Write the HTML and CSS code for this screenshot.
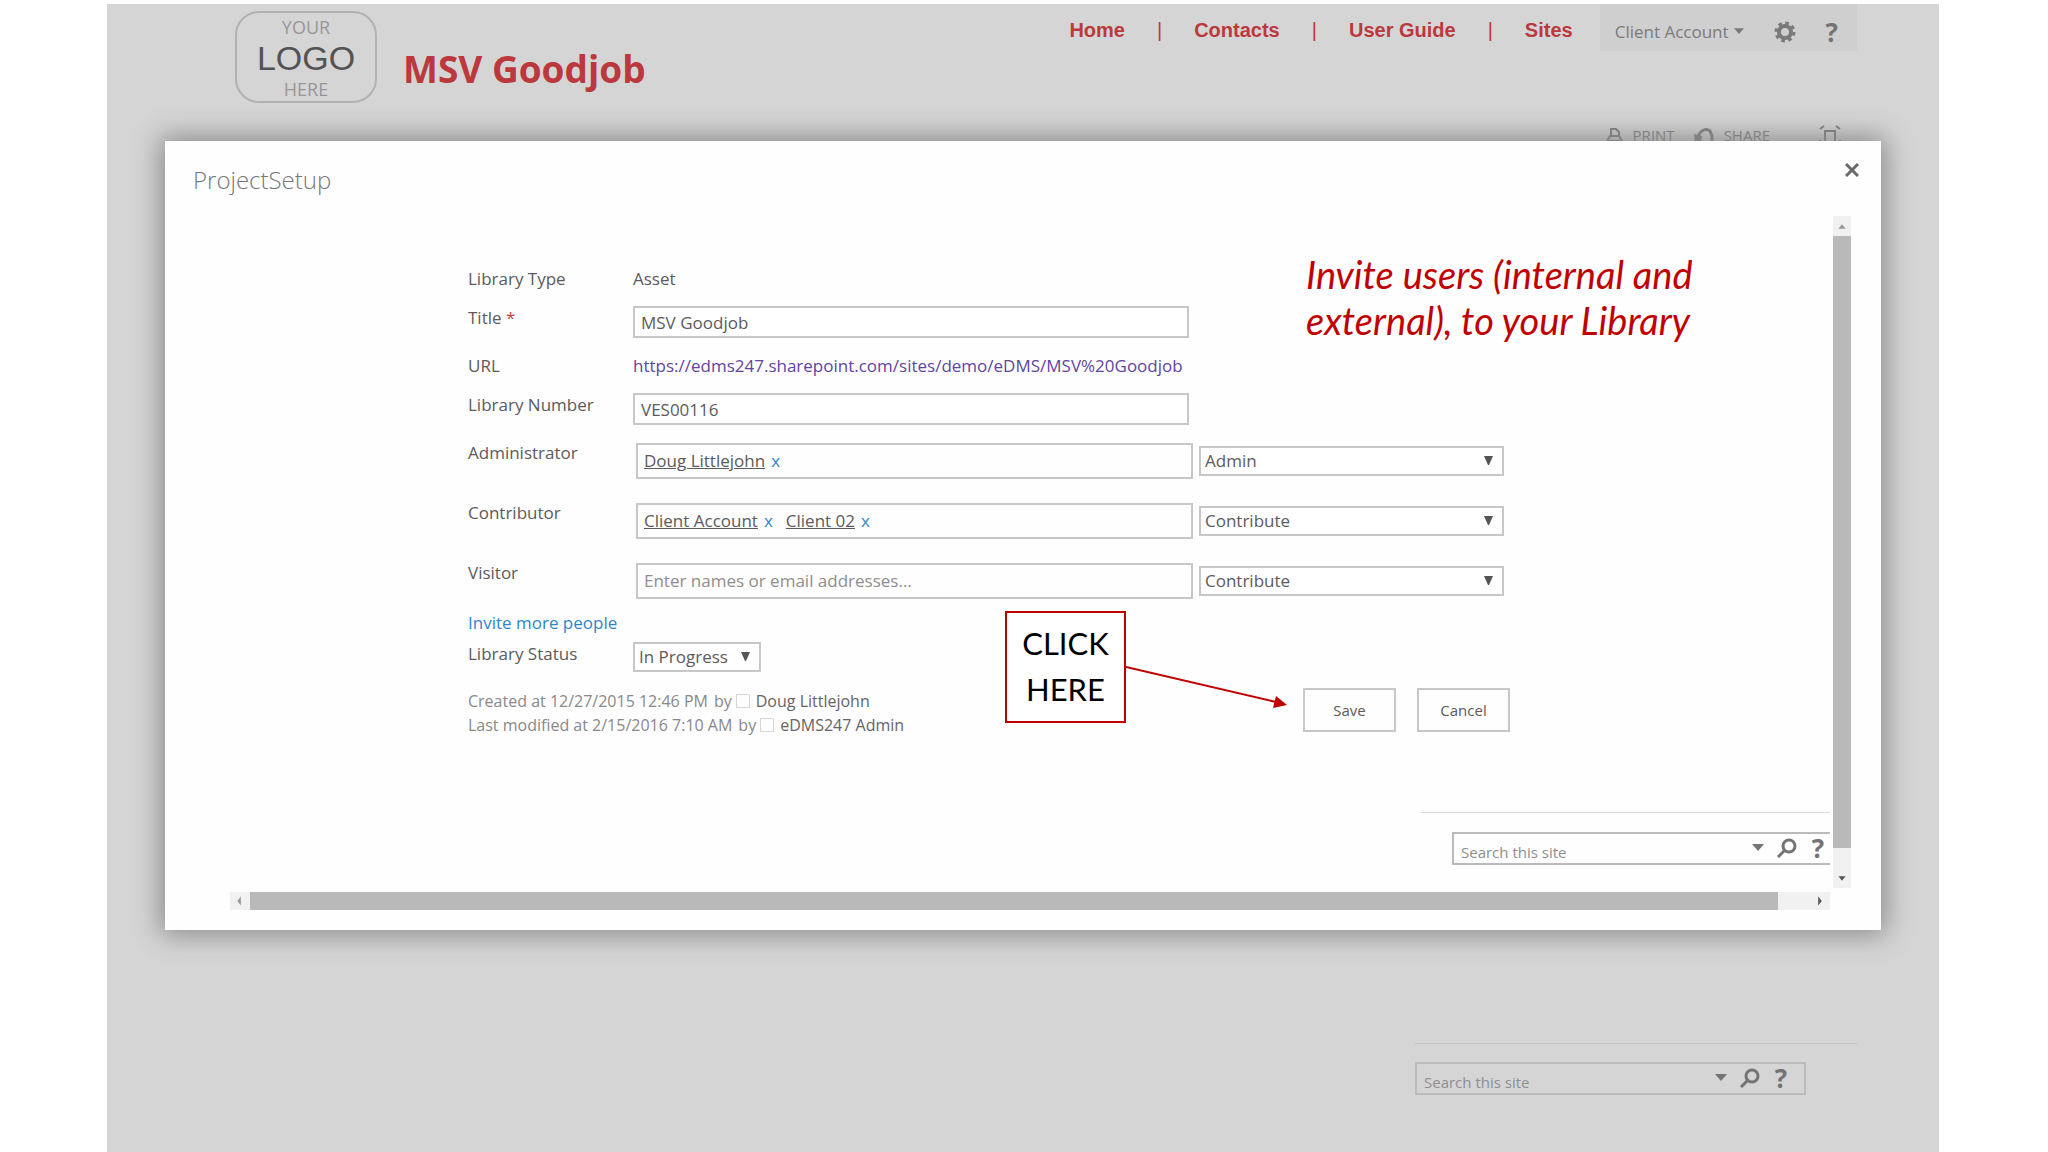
FILE: index.html
```html
<!DOCTYPE html>
<html lang="en">
<head>
<meta charset="utf-8">
<title>MSV Goodjob - ProjectSetup</title>
<link rel="stylesheet" href="styles.css">
</head>
<body>
<svg class="defs" width="0" height="0" aria-hidden="true">
  <symbol id="i-search" viewBox="0 0 20 20"><circle cx="12" cy="8" r="6" fill="none" stroke="currentColor" stroke-width="3"/><path d="M8 12L1 19" stroke="currentColor" stroke-width="3"/></symbol>
  <symbol id="i-down" viewBox="0 0 12 8"><path d="M0 0h12L6 7z" fill="currentColor"/></symbol>
</svg>
<div class="site">
  <header class="top">
    <div class="brand">
      <div class="logo"><span>YOUR</span><strong>LOGO</strong><span>HERE</span></div>
      <h1>MSV Goodjob</h1>
    </div>
    <nav class="nav">
      <a href="#">Home</a><i>|</i><a href="#">Contacts</a><i>|</i><a href="#">User Guide</a><i>|</i><a href="#">Sites</a>
    </nav>
    <div class="account">
      <button type="button" class="user">Client Account<svg width="10" height="7"><use href="#i-down"/></svg></button>
      <button type="button" aria-label="Settings"><svg width="22" height="22" viewBox="0 0 22 22"><g fill="none" stroke="currentColor"><circle cx="11" cy="11" r="6" stroke-width="4"/><circle cx="11" cy="11" r="9" stroke-width="3" stroke-dasharray="3.6 3.47"/></g></svg></button>
      <button type="button" class="help" aria-label="Help">?</button>
    </div>
  </header>
  <div class="tools">
    <a href="#"><svg width="17" height="16" viewBox="0 0 17 16"><path d="M5 9V2h5l3 3v4M1 14l3-5h9l3 5z" fill="none" stroke="currentColor" stroke-width="2"/></svg>PRINT</a>
    <a href="#"><svg width="20" height="17" viewBox="0 0 20 17"><path d="M4 10C6 3 12 1 16 4l2 5v6" fill="none" stroke="currentColor" stroke-width="3"/><path d="M0 7l8 2-1 6H1z" fill="currentColor"/></svg>SHARE</a>
    <a href="#" class="focus" aria-label="Focus on content"><svg width="22" height="20" viewBox="0 0 22 20"><path d="M6 6h10v11H6zM1 4l4-3M17 1l4 3M1 15v4h4M17 19h4v-4" fill="none" stroke="currentColor" stroke-width="2"/></svg></a>
  </div>
  <footer class="foot">
    <form class="search">
      <input type="text" aria-label="Search this site" placeholder="Search this site">
      <button type="button" aria-label="Scope"><svg width="12" height="8"><use href="#i-down"/></svg></button>
      <button type="button" aria-label="Search"><svg width="20" height="20"><use href="#i-search"/></svg></button>
      <button type="button" class="help" aria-label="Search help">?</button>
    </form>
  </footer>

  <section class="dialog" role="dialog" aria-labelledby="dlg-title">
    <div class="dialog-head">
      <h2 id="dlg-title">ProjectSetup</h2>
      <button type="button" aria-label="Close"><svg width="14" height="14" viewBox="0 0 14 14"><path d="M1 1l12 12M13 1L1 13" stroke="currentColor" stroke-width="3"/></svg></button>
    </div>
    <div class="frame">
      <div class="pane">
        <form class="setup">
          <div class="row r-text"><span class="label">Library Type</span><span>Asset</span></div>
          <div class="row r-input"><label for="title">Title <em>*</em></label><input id="title" class="box" type="text" value="MSV Goodjob"></div>
          <div class="row r-text"><span class="label">URL</span><a class="url" href="#">https://edms247.sharepoint.com/sites/demo/eDMS/MSV%20Goodjob</a></div>
          <div class="row r-input"><label for="num">Library Number</label><input id="num" class="box" type="text" value="VES00116"></div>
          <div class="row r-people"><label for="admin">Administrator</label>
            <div class="people"><a href="#">Doug Littlejohn</a><button type="button" aria-label="Remove Doug Littlejohn">x</button><input id="admin" type="text"></div>
            <div class="select role"><select aria-label="Administrator role"><option>Admin</option></select><svg width="9" height="9" viewBox="0 0 9 9"><path d="M0 0h9L5 9H4z"/></svg></div></div>
          <div class="row r-people"><label for="contrib">Contributor</label>
            <div class="people"><a href="#">Client Account</a><button type="button" aria-label="Remove Client Account">x</button><a href="#">Client 02</a><button type="button" aria-label="Remove Client 02">x</button><input id="contrib" type="text"></div>
            <div class="select role"><select aria-label="Contributor role"><option>Contribute</option></select><svg width="9" height="9" viewBox="0 0 9 9"><path d="M0 0h9L5 9H4z"/></svg></div></div>
          <div class="row r-visitor"><label for="visitor">Visitor</label>
            <div class="people"><input id="visitor" type="text" placeholder="Enter names or email addresses..."></div>
            <div class="select role"><select aria-label="Visitor role"><option>Contribute</option></select><svg width="9" height="9" viewBox="0 0 9 9"><path d="M0 0h9L5 9H4z"/></svg></div></div>
          <div class="row r-link"><a class="invite" href="#">Invite more people</a></div>
          <div class="row r-status"><label for="status">Library Status</label>
            <div class="select status"><select id="status"><option>In Progress</option></select><svg width="9" height="9" viewBox="0 0 9 9"><path d="M0 0h9L5 9H4z"/></svg></div></div>
          <div class="end">
            <div class="meta">
              <p>Created at 12/27/2015 12:46 PM<span>by</span><b></b><a href="#">Doug Littlejohn</a></p>
              <p>Last modified at 2/15/2016 7:10 AM<span>by</span><b></b><a href="#">eDMS247 Admin</a></p>
            </div>
            <div class="actions"><button type="button">Save</button><button type="button">Cancel</button></div>
          </div>
        </form>
        <div class="pane-foot">
          <form class="search">
            <input type="text" aria-label="Search this site" placeholder="Search this site">
            <button type="button" aria-label="Scope"><svg width="12" height="8"><use href="#i-down"/></svg></button>
            <button type="button" aria-label="Search"><svg width="20" height="20"><use href="#i-search"/></svg></button>
            <button type="button" class="help" aria-label="Search help">?</button>
          </form>
        </div>
      </div>
      <div class="bar vertical"><svg class="dim" viewBox="0 0 20 20"><path d="M6 13h8l-4-5z"/></svg><div class="thumb"></div><svg viewBox="0 0 20 20"><path d="M6 8h8l-4 5z"/></svg></div>
      <div class="bar horizontal"><svg class="dim" viewBox="0 0 20 20"><path d="M11 5v10l-4-5z"/></svg><div class="thumb"></div><svg viewBox="0 0 20 20"><path d="M8 5v10l4-5z"/></svg></div>
    </div>
    <p class="note">Invite users (internal and<br>external), to your Library</p>
    <div class="callout">CLICK<br>HERE</div>
    <svg class="arrow" width="162" height="48" viewBox="0 0 162 48"><path d="M0 3L150 38" stroke="#c00000" stroke-width="2"/><path d="M161 41l-14 3 3-12z" fill="#c00000"/></svg>
  </section>
</div>
</body>
</html>
```

FILE: styles.css
```css
* { box-sizing: border-box; }
body {
  margin: 0;
  padding: 4px 109px 0 107px;
  background: #fff;
  color: #5c5a5c;
  font: 17px/24px "Open Sans", "Noto Sans", sans-serif;
}
h1, h2, p { margin: 0; }
a { color: inherit; text-decoration: none; }
button, input, select { font: inherit; color: inherit; margin: 0; }
button { background: none; border: 0; padding: 0; display: flex; align-items: center; justify-content: center; }
.defs { position: absolute; }

.site {
  position: relative;
  display: flex;
  flex-direction: column;
  min-height: calc(100vh - 4px);
  background: #d6d5d6;
}
.top { display: flex; align-items: flex-start; padding: 0 82px 0 128px; }
.brand { display: flex; flex: 1; gap: 26px; padding-top: 7px; }
.logo {
  display: flex;
  flex-direction: column;
  align-items: center;
  justify-content: center;
  width: 142px;
  height: 92px;
  padding-top: 2px;
  border: 2px solid #b2b1b2;
  border-radius: 24px;
  color: #979697;
  font-size: 18px;
  line-height: 24px;
}
.logo strong { color: #545354; font: 400 34px/38px "Liberation Sans", Arial, sans-serif; }
h1 { color: #bb383d; font-size: 37px; line-height: 48px; font-weight: 700; padding-top: 34px; }
.nav {
  display: flex;
  gap: 32px;
  margin-right: 27px;
  padding-top: 14px;
  color: #bb383d;
  font: 700 20px/24px "Liberation Sans", Arial, sans-serif;
}
.nav i { font-style: normal; font-weight: 400; }
.account {
  display: flex;
  align-items: center;
  gap: 30px;
  height: 47px;
  padding: 8px 19px 0 15px;
  background: #d0cfd0;
  color: #7b7a7b;
}
.user { gap: 5px; }
.help { font-weight: 700; font-size: 26px; color: #757375; }
.tools {
  display: flex;
  justify-content: flex-end;
  gap: 19px;
  padding: 20px 98px 0 0;
  font-size: 15px;
  color: #7b7a7b;
}
.tools a { display: flex; align-items: center; gap: 10px; }
.tools .focus { margin-left: 30px; }

.foot {
  width: 442px;
  margin: auto 82px 57px auto;
  padding-top: 18px;
  border-top: 1px solid #c4c2c4;
}
.search {
  display: flex;
  align-items: center;
  gap: 13px;
  width: 391px;
  height: 33px;
  padding: 0 15px 2px 7px;
  border: 2px solid #bdbabd;
  color: #757375;
  flex: none;
}
.search input {
  flex: 1;
  min-width: 0;
  height: 28px;
  padding: 8px 0 0;
  border: 0;
  background: none;
  font-size: 15px;
}
.search .help { width: 16px; height: 20px; }
::placeholder { color: #8f8d8f; opacity: 1; }

.dialog {
  position: absolute;
  top: 137px;
  left: 58px;
  right: 58px;
  background: #fefefe;
  box-shadow: 0 0 26px 4px #888;
}
.dialog-head {
  display: flex;
  justify-content: space-between;
  align-items: flex-start;
  height: 75px;
  padding: 20px 22px 0 28px;
}
h2 { color: #777; font-size: 24px; line-height: 38px; font-weight: 300; }
.dialog-head button { color: #6b696b; padding-top: 2px; }
.frame {
  display: grid;
  grid-template-columns: 1fr 18px;
  gap: 4px 3px;
  padding: 0 30px 20px 65px;
}
.pane { display: flex; flex-direction: column; min-height: 672px; padding: 51px 0 0 238px; overflow: hidden; }
.setup { max-width: 1042px; }
.row { display: flex; align-items: flex-start; }
.row label, .row .label { width: 165px; flex: none; }
.row em { color: #d04040; font-style: normal; }
.r-text { height: 39px; }
.r-input { height: 48px; }
.r-people { height: 60px; }
.r-visitor { height: 50px; }
.r-link { height: 31px; }
.r-status { height: 46px; }
.box { width: 556px; height: 32px; padding: 0 6px; border: 2px solid #c8c6c8; background: #fff; }
.url { color: #5f459f; }
.people {
  display: flex;
  align-items: center;
  width: 557px;
  height: 36px;
  margin: 2px 6px 0 3px;
  padding: 0 6px;
  border: 2px solid #c8c6c8;
}
.people a { text-decoration: underline; }
.people button { color: #2e86c8; margin: 0 13px 0 6px; }
.people input { flex: 1; min-width: 0; border: 0; padding: 0; background: none; }
.select { display: grid; align-items: center; height: 30px; }
.select select, .select svg { grid-area: 1 / 1; }
.select select { width: 100%; height: 100%; appearance: none; border: 2px solid #c8c6c8; border-radius: 0; background: #fff; padding: 0 4px; }
.select svg { justify-self: end; margin: 0 11px 2px 0; pointer-events: none; fill: #555; }
.role { width: 305px; margin-top: 5px; }
.status { width: 128px; }
.invite { color: #2e86c8; }
.end { display: flex; justify-content: space-between; }
.meta { color: #8a888a; font-size: 16px; padding-top: 1px; }
.meta p { display: flex; align-items: center; }
.meta span { margin-left: 6px; }
.meta b { width: 14px; height: 14px; margin: 0 6px 0 4px; border: 1px solid #d8d6d8; }
.meta a { color: #666466; }
.actions { display: flex; gap: 21px; }
.actions button { width: 93px; height: 44px; border: 2px solid #c8c6c8; font-size: 15px; }
.pane-foot {
  width: 409px;
  margin: auto 0 0 auto;
  padding: 19px 0 23px 31px;
  border-top: 1px solid #dcdadc;
  overflow: hidden;
}

.bar { display: flex; }
.bar svg { width: 20px; height: 20px; background: #f2f1f2; fill: #555; flex: none; }
.bar .dim { fill: #999; }
.thumb { flex: 1; background: #bab9ba; }
.vertical { flex-direction: column; background: #f2f1f2; }
.vertical svg { width: 18px; }
.vertical .thumb { margin-bottom: 20px; }
.horizontal { background: #f2f1f2; }
.horizontal svg { height: 18px; }
.horizontal .thumb { margin-right: 32px; }

.note {
  position: absolute;
  top: 110px;
  left: 1141px;
  color: #c00000;
  font: italic 38px/46px Lato, sans-serif;
}
.callout {
  position: absolute;
  top: 470px;
  left: 840px;
  width: 121px;
  padding: 7px 0 9px;
  border: 2px solid #c00000;
  background: #fff;
  color: #000;
  text-align: center;
  font: 31px/46px Lato, sans-serif;
}
.arrow { position: absolute; top: 523px; left: 961px; }
```
